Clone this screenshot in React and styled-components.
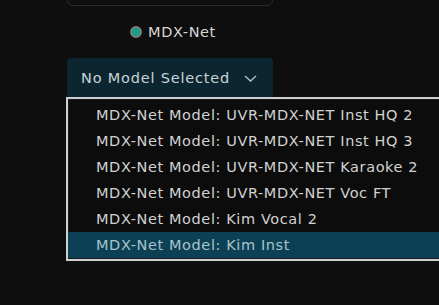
import React from "react";
import styled, { createGlobalStyle } from "styled-components";

const Global = createGlobalStyle`
  html, body { margin: 0; padding: 0; background: #0e0e0e; }
  body { width: 439px; height: 305px; overflow: hidden; font-family: "DejaVu Sans", sans-serif; }
`;

const Page = styled.div`
  position: relative;
  width: 439px;
  height: 305px;
  background: #0e0e0e;
  padding-left: 67px;
  box-sizing: border-box;
`;

const Column = styled.div`
  width: 206px;
  display: flex;
  flex-direction: column;
  align-items: stretch;
`;

const TopBox = styled.div`
  height: 26px;
  margin-top: -20px;
  border: 1px solid #2c2c2c;
  border-radius: 6px;
  box-sizing: border-box;
  background: #0f0f0f;
`;

const RadioRow = styled.label`
  display: flex;
  align-items: center;
  justify-content: center;
  gap: 6px;
  margin-top: 18px;
  height: 16px;
  color: #d6d6d6;
  font-size: 14.5px;
  letter-spacing: 0.6px;
  padding-left: 6px;
`;

const RadioDot = styled.span`
  width: 12px;
  height: 12px;
  border-radius: 50%;
  box-sizing: border-box;
  border: 2px solid #7e7e7e;
  background: #17a084;
`;

const SelectButton = styled.div`
  margin-top: 18px;
  height: 40px;
  background: #0b2630;
  border-radius: 3px;
  display: flex;
  align-items: center;
  padding-left: 14px;
  gap: 14px;
  color: #c9d3d6;
  font-size: 14.5px;
  letter-spacing: 0.8px;
`;

const Menu = styled.ul`
  position: absolute;
  left: 66px;
  top: 97px;
  width: 390px;
  height: 164px;
  margin: 0;
  padding: 3px 0 1px;
  list-style: none;
  box-sizing: border-box;
  background: #0c0c0c;
  border: 2px solid #cfcfcf;
  box-shadow: inset 0 0 0 1px #1a1a1a;
`;

const Item = styled.li`
  height: 26px;
  display: flex;
  align-items: center;
  padding-left: 28px;
  font-size: 14.5px;
  letter-spacing: 0.6px;
  color: ${(p) => (p.$active ? "#a9c3ca" : "#d2d2d2")};
  background: ${(p) => (p.$active ? "#0c4155" : "transparent")};
  white-space: nowrap;
`;

const Chevron = () => (
  <svg width="13" height="7" viewBox="0 0 13 7" fill="none">
    <path d="M1 1l5.5 5 5.5-5" stroke="#b8c4c8" strokeWidth="1.3" />
  </svg>
);

const items = [
  "MDX-Net Model: UVR-MDX-NET Inst HQ 2",
  "MDX-Net Model: UVR-MDX-NET Inst HQ 3",
  "MDX-Net Model: UVR-MDX-NET Karaoke 2",
  "MDX-Net Model: UVR-MDX-NET Voc FT",
  "MDX-Net Model: Kim Vocal 2",
  "MDX-Net Model: Kim Inst",
];

export default function App() {
  return (
    <>
      <Global />
      <Page>
        <Column>
          <TopBox />
          <RadioRow>
            <RadioDot />
            MDX-Net
          </RadioRow>
          <SelectButton>
            No Model Selected
            <Chevron />
          </SelectButton>
        </Column>
        <Menu>
          {items.map((t, i) => (
            <Item key={t} $active={i === items.length - 1}>
              {t}
            </Item>
          ))}
        </Menu>
      </Page>
    </>
  );
}
